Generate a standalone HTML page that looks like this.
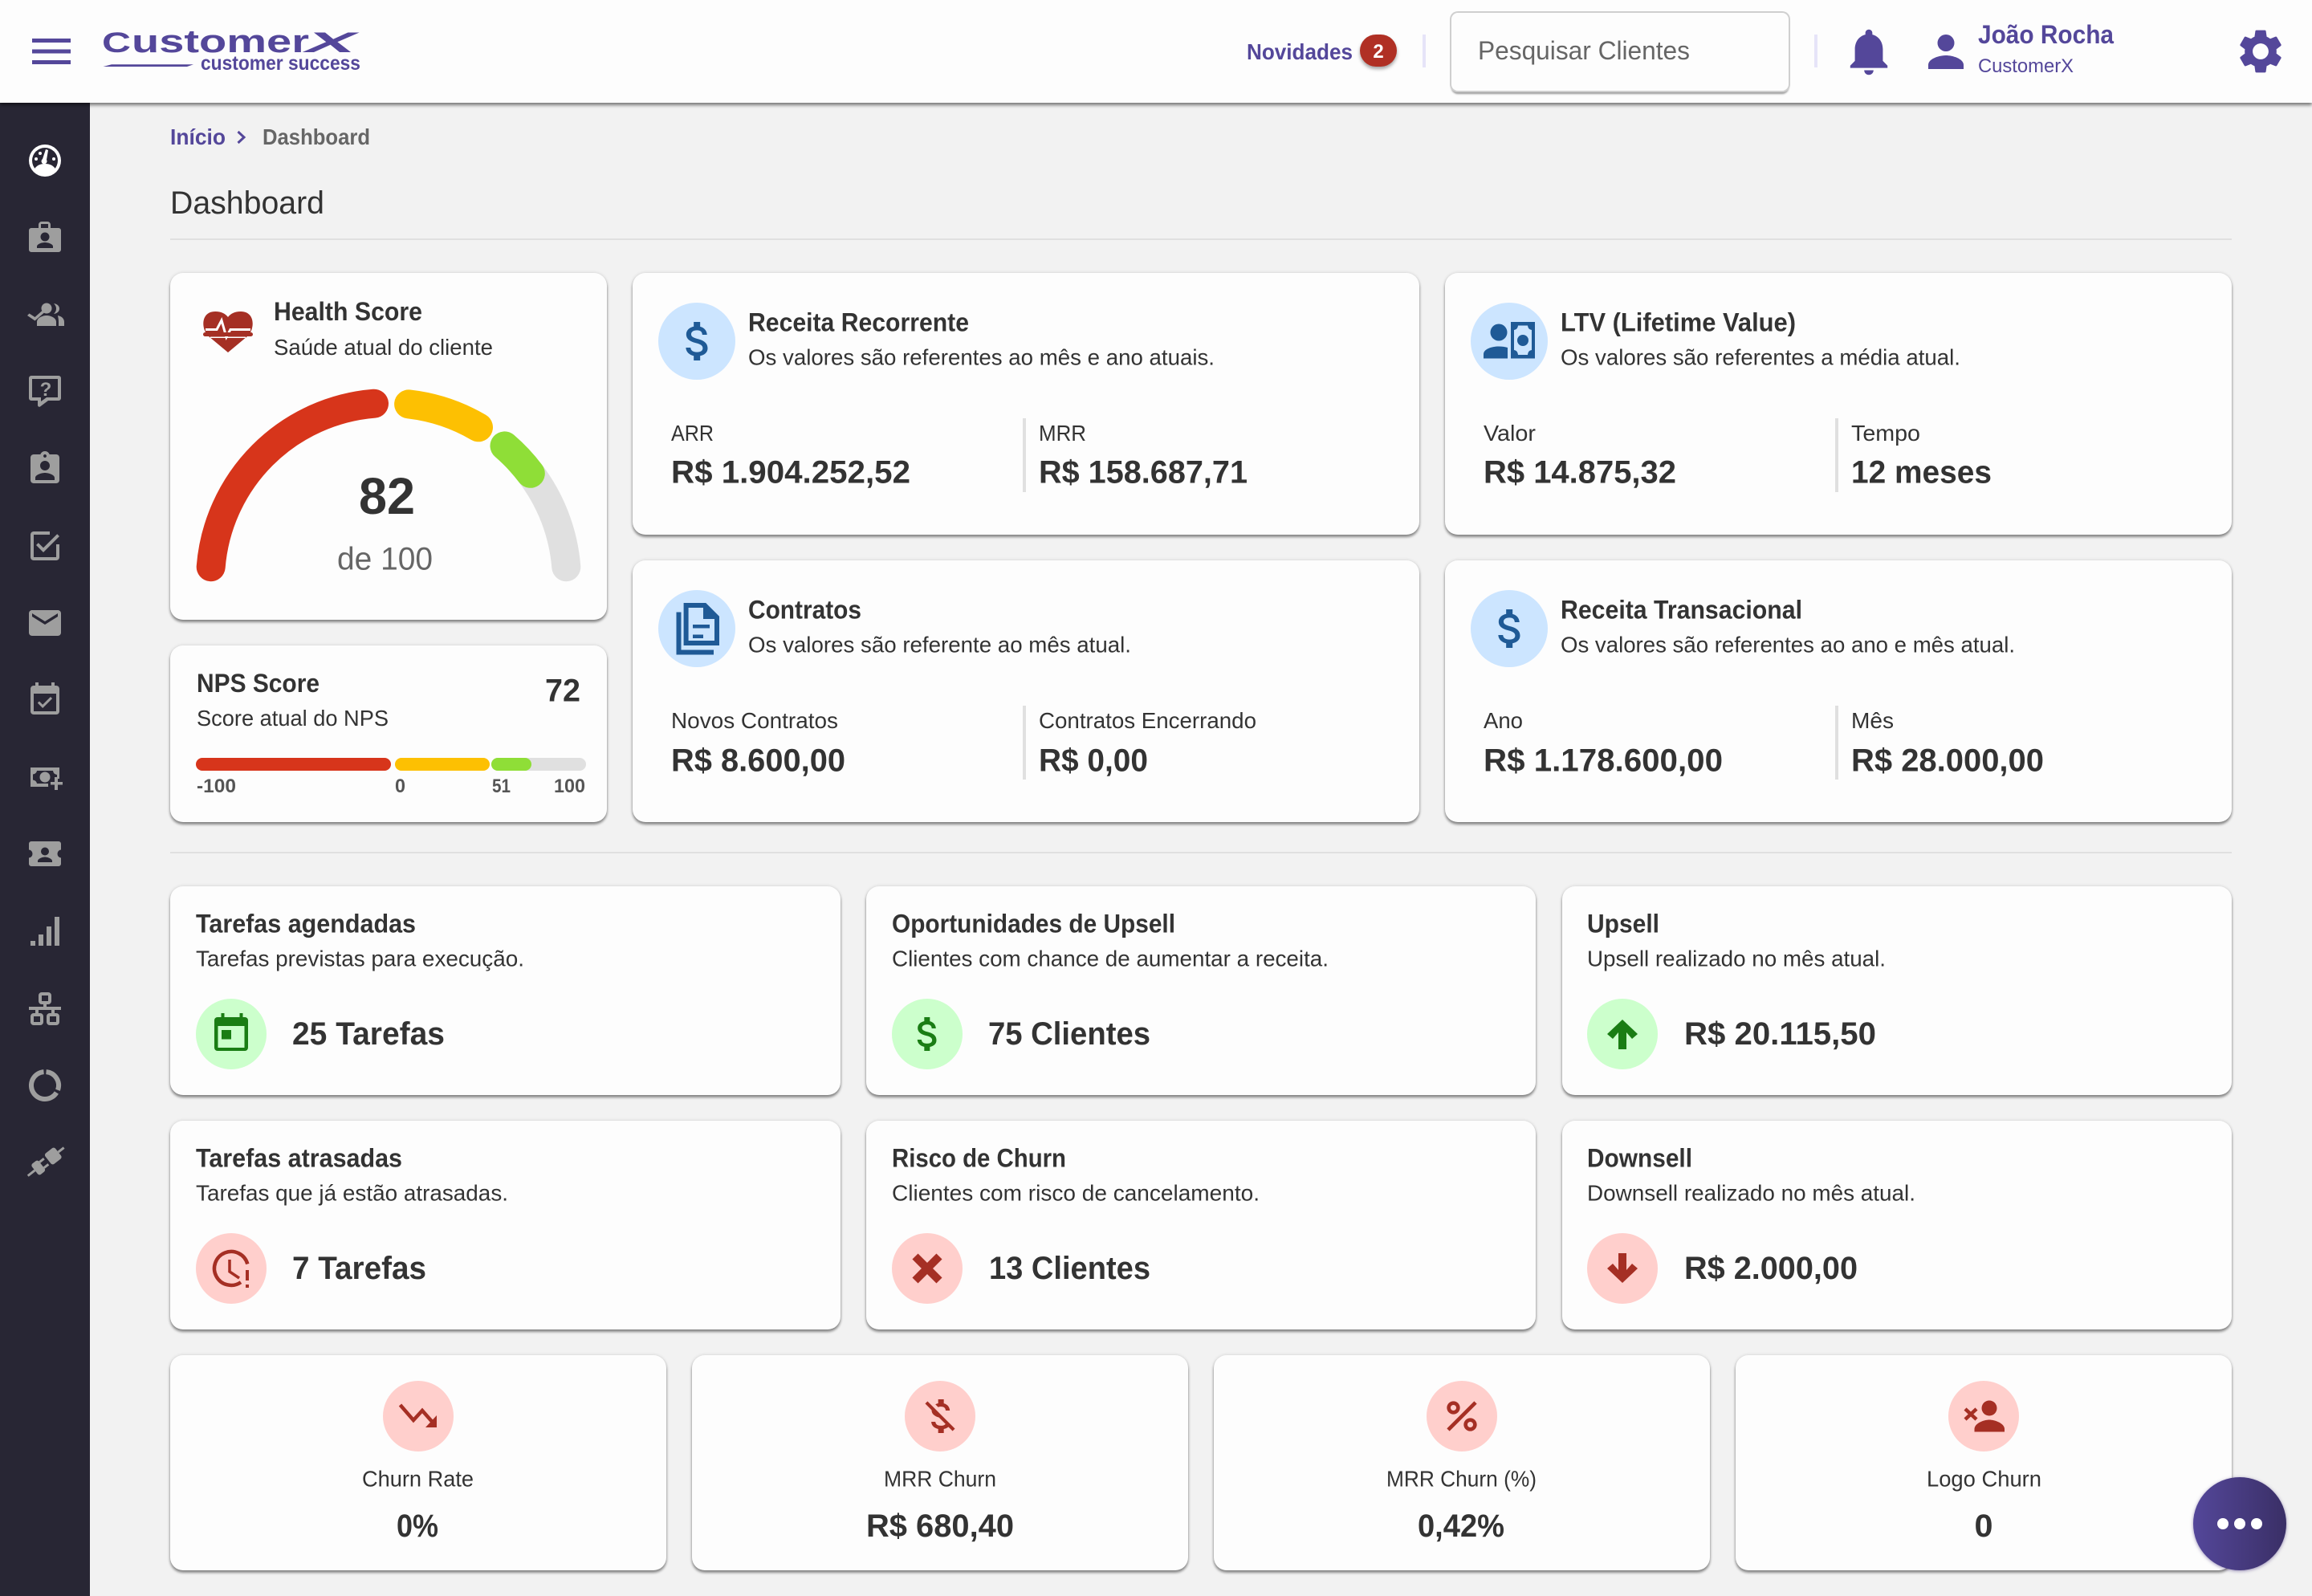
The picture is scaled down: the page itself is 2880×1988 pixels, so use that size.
<!DOCTYPE html>
<html lang="pt-BR"><head><meta charset="utf-8"><title>Dashboard</title>
<style>
html,body{margin:0;padding:0;width:2880px;height:1988px;overflow:hidden;background:#f2f2f2;font-family:"Liberation Sans",sans-serif}
.a{position:absolute}
#head{left:0;top:0;width:2880px;height:128px;background:#fdfdfd;box-shadow:0 3px 4px rgba(0,0,0,.5);z-index:3}
#side{left:0;top:128px;width:112px;height:1860px;background:#282634;z-index:2}
.c{position:absolute;background:#fdfdfd;border-radius:16px;box-shadow:0 3px 3px rgba(0,0,0,.42),0 0 4px rgba(0,0,0,.14)}
#search{left:1808px;top:16px;width:420px;height:97px;background:#fdfdfd;border-radius:8px;box-shadow:0 0 0 2px #cfcfcf,0 4px 2px rgba(0,0,0,.4);z-index:4}
.hr{position:absolute;left:212px;width:2568px;height:2px;background:#e0e0e0}
svg{position:absolute;left:0;top:0;z-index:5}
text{font-family:"Liberation Sans",sans-serif;fill:#333}
.t{font-size:32px;font-weight:700}
.s{font-size:28px}
.v{font-size:40px;font-weight:700}
.l{font-size:28px}
.n{font-size:24px;font-weight:700;fill:#555}
.p{fill:#54479a}
.g{fill:#9e9e9e}
.d{fill:#282634}
.bl{fill:#1f5a96}
.gr{fill:#1a7d14}
.re{fill:#a52f24}
</style></head><body>
<div class="a" id="head"></div><div class="a" id="side"></div><div class="a" id="search"></div>
<div class="hr" style="top:297px"></div><div class="hr" style="top:1061px"></div>
<div class="c" style="left:212px;top:340px;width:544px;height:432px"></div>
<div class="c" style="left:212px;top:804px;width:544px;height:220px"></div>
<div class="c" style="left:788px;top:340px;width:980px;height:326px"></div>
<div class="c" style="left:788px;top:698px;width:980px;height:326px"></div>
<div class="c" style="left:1800px;top:340px;width:980px;height:326px"></div>
<div class="c" style="left:1800px;top:698px;width:980px;height:326px"></div>
<div class="c" style="left:212px;top:1104px;width:835px;height:260px"></div>
<div class="c" style="left:1079px;top:1104px;width:834px;height:260px"></div>
<div class="c" style="left:1946px;top:1104px;width:834px;height:260px"></div>
<div class="c" style="left:212px;top:1396px;width:835px;height:260px"></div>
<div class="c" style="left:1079px;top:1396px;width:834px;height:260px"></div>
<div class="c" style="left:1946px;top:1396px;width:834px;height:260px"></div>
<div class="c" style="left:212px;top:1688px;width:618px;height:268px"></div>
<div class="c" style="left:862px;top:1688px;width:618px;height:268px"></div>
<div class="c" style="left:1512px;top:1688px;width:618px;height:268px"></div>
<div class="c" style="left:2162px;top:1688px;width:618px;height:268px"></div>

<svg width="2880" height="1988" viewBox="0 0 2880 1988" xmlns="http://www.w3.org/2000/svg">
<defs>
<linearGradient id="fab" x1="0" x2="1" y1="0" y2="0"><stop offset="0" stop-color="#54479a"/><stop offset="1" stop-color="#3a2f66"/></linearGradient>
<path id="dollar" d="M11.8 10.9c-2.27-.59-3-1.2-3-2.15 0-1.09 1.01-1.85 2.7-1.85 1.78 0 2.44.85 2.5 2.1h2.21c-.07-1.72-1.12-3.3-3.21-3.81V3h-3v2.16c-1.94.42-3.5 1.68-3.5 3.61 0 2.31 1.91 3.46 4.7 4.13 2.5.6 3 1.48 3 2.41 0 .69-.49 1.79-2.7 1.79-2.06 0-2.87-.92-2.98-2.1h-2.2c.12 2.19 1.76 3.42 3.68 3.83V21h3v-2.15c1.95-.37 3.5-1.5 3.5-3.55 0-2.84-2.43-3.81-4.7-4.4z"/>
<path id="arrow" d="M0-18.5L19-.5 12 5.5 5-2.500V18.500H-5V-2.500L-12 5.500-19-.5z"/>
</defs>

<!-- header -->
<g class="p"><rect x="40" y="48" width="48" height="5"/><rect x="40" y="61.500" width="48" height="5"/><rect x="40" y="75" width="48" height="5"/></g>
<text x="127" y="65" font-size="35" font-weight="700" style="fill:#54479a" textLength="36" lengthAdjust="spacingAndGlyphs">C</text>
<text x="164" y="65" font-size="40" font-weight="700" style="fill:#54479a" textLength="221" lengthAdjust="spacingAndGlyphs">ustomer</text>
<text x="381" y="65" font-size="35" font-weight="700" font-style="italic" style="fill:#54479a" textLength="62" lengthAdjust="spacingAndGlyphs">X</text>
<text x="250" y="87" font-size="25" font-weight="700" style="fill:#54479a" textLength="199" lengthAdjust="spacingAndGlyphs">customer success</text>
<path class="p" d="M128.500 83L139 80.300H241L233 83z"/>

<text x="1553" y="74" class="t" font-size="28" style="fill:#54479a;font-size:28px" textLength="132" lengthAdjust="spacingAndGlyphs">Novidades</text>
<rect x="1694" y="43" width="46" height="40" rx="20" fill="#b03024" style="filter:drop-shadow(0 3px 2px rgba(0,0,0,.35))"/>
<text x="1717" y="72" text-anchor="middle" font-size="24" font-weight="700" style="fill:#fff">2</text>
<rect x="1772" y="43" width="4" height="41" fill="#e6e4f8"/>
<text x="1841" y="74" font-size="32" style="fill:#666" textLength="264" lengthAdjust="spacingAndGlyphs">Pesquisar Clientes</text>
<rect x="2260" y="43" width="4" height="41" fill="#e6e4f8"/>
<path class="p" transform="translate(2293.200 29.500) scale(2.900)" d="M12 22c1.100 0 2-.9 2-2h-4c0 1.100.89 2 2 2zm6-6v-5c0-3.070-1.640-5.640-4.500-6.320V4c0-.83-.67-1.500-1.500-1.500s-1.500.67-1.500 1.500v.68C7.630 5.360 6 7.920 6 11v5l-2 2v1h16v-1l-2-2z"/>
<circle class="p" cx="2424" cy="53.500" r="10.500"/>
<path class="p" d="M2402 86v-5c0-8 14-12 22-12s22 4 22 12v5z"/>
<text x="2464" y="54" font-size="32" font-weight="700" style="fill:#54479a" textLength="169" lengthAdjust="spacingAndGlyphs">João Rocha</text>
<text x="2464" y="90" font-size="24" style="fill:#54479a" textLength="119" lengthAdjust="spacingAndGlyphs">CustomerX</text>
<path class="p" transform="translate(2783 31) scale(2.750)" d="M19.140 12.940c.04-.3.06-.61.06-.94 0-.32-.02-.64-.07-.94l2.030-1.580c.18-.14.23-.41.12-.61l-1.920-3.320c-.12-.22-.37-.29-.59-.22l-2.390.96c-.5-.38-1.030-.7-1.620-.94l-.36-2.540c-.04-.24-.24-.41-.48-.41h-3.840c-.24 0-.43.17-.47.41l-.36 2.540c-.59.24-1.130.57-1.620.94l-2.390-.96c-.22-.08-.47 0-.59.22L2.740 8.870c-.12.21-.08.47.12.61l2.030 1.580c-.05.3-.09.63-.09.94s.02.64.07.94l-2.030 1.580c-.18.14-.23.41-.12.61l1.920 3.320c.12.22.37.29.59.22l2.390-.96c.5.38 1.030.7 1.620.94l.36 2.540c.05.24.24.41.48.41h3.840c.24 0 .44-.17.47-.41l.36-2.540c.59-.24 1.130-.56 1.620-.94l2.390.96c.22.08.47 0 .59-.22l1.920-3.320c.12-.22.07-.47-.12-.61l-2.010-1.580zM12 15.600c-1.980 0-3.600-1.620-3.600-3.600s1.620-3.600 3.600-3.600 3.600 1.620 3.600 3.600-1.620 3.600-3.600 3.600z"/>

<!-- sidebar -->
<circle cx="56" cy="200" r="20" fill="#fff"/><circle class="d" cx="56" cy="200" r="16"/>
<path fill="#fff" d="M42 212c3-6 8-8 14-8s11 2 14 8c-4 4-9 6-14 6s-10-2-14-6z"/>
<circle cx="45" cy="198" r="2" fill="#fff"/><circle cx="50" cy="191" r="2" fill="#fff"/><circle cx="67" cy="198" r="2" fill="#fff"/>
<path fill="#fff" d="M57 186l3 1-2 12a3.500 3.500 0 1 1-5-1z"/>

<g class="g">
<path fill-rule="evenodd" d="M39 284h9v-4a4 4 0 0 1 4-4h7a4 4 0 0 1 4 4v4h10a3 3 0 0 1 3 3v24a3 3 0 0 1-3 3H39a3 3 0 0 1-3-3v-24a3 3 0 0 1 3-3zm12 0h9v-5h-9z"/>
<circle class="d" cx="56" cy="295" r="5.500"/><path class="d" d="M46 309v-2c0-3 6-5 10-5s10 2 10 5v2z"/>

<path d="M34 393l2.500-2.500 7 4.500 9-8 2.500 2.500-11.500 10z"/>
<circle cx="58" cy="384" r="6.500"/><path d="M46 406v-5c0-5 7-8 12-8s12 3 12 8v5z"/>
<path d="M67 378c4 .5 7 3 7 6.500s-3 6-7 6.500c2-2 3-4 3-6.500s-1-4.500-3-6.500zM72 393c5 1 8 4 8 8v5h-7v-5c0-3-.5-5.500-1-8z"/>

<path fill-rule="evenodd" d="M39 468h34a3 3 0 0 1 3 3v25a3 3 0 0 1-3 3H60l-10 7.500a2 2 0 0 1-3-1.500V499h-8a3 3 0 0 1-3-3v-25a3 3 0 0 1 3-3zm1 4v23h11v5l7-5h14v-23z"/>
<text x="57" y="493" text-anchor="middle" font-size="24" font-weight="700" style="fill:#9e9e9e">?</text>

<path transform="translate(32 560) scale(2)" d="M19 3h-4.180C14.400 1.840 13.300 1 12 1c-1.300 0-2.400.84-2.820 2H5c-1.100 0-2 .9-2 2v14c0 1.100.9 2 2 2h14c1.100 0 2-.9 2-2V5c0-1.100-.9-2-2-2zm-7 0c.55 0 1 .45 1 1s-.45 1-1 1-1-.45-1-1 .45-1 1-1zm0 4c1.660 0 3 1.340 3 3s-1.340 3-3 3-3-1.340-3-3 1.340-3 3-3zm6 12H6v-1.400c0-2 4-3.100 6-3.100s6 1.100 6 3.100V19z"/>
<path transform="translate(32 656) scale(2)" d="M19 19H5V5h10V3H5c-1.100 0-2 .9-2 2v14c0 1.100.9 2 2 2h14c1.100 0 2-.9 2-2v-8h-2v8zM7.900 10.100L6.500 11.500 11 16l10-10-1.400-1.400-8.600 8.600-3.100-3.100z"/>
<path transform="translate(32 752) scale(2)" d="M20 4H4c-1.100 0-1.990.9-1.990 2L2 18c0 1.100.9 2 2 2h16c1.100 0 2-.9 2-2V6c0-1.100-.9-2-2-2zm0 4l-8 5-8-5V6l8 5 8-5v2z"/>
<path transform="translate(32 848) scale(2)" d="M16.530 11.060L15.470 10l-4.880 4.880-2.120-2.120-1.060 1.060L10.590 17l5.940-5.940zM19 3h-1V1h-2v2H8V1H6v2H5c-1.110 0-1.990.9-1.990 2L3 19c0 1.100.89 2 2 2h14c1.100 0 2-.9 2-2V5c0-1.100-.9-2-2-2zm0 16H5V8h14v11z"/>

<rect x="38" y="956" width="36" height="24"/>
<path class="d" d="M46 960h20c.5 3 2 4.500 5 5v10h-1v1H46c-.5-2.500-2-4-5-4.500v-7c3-.5 4.500-2 5-4.500z"/>
<circle cx="56" cy="968" r="6.500"/>
<rect class="d" x="60" y="970" width="18" height="14" rx="5"/>
<rect x="63" y="974" width="15" height="3.500"/><rect x="68" y="968" width="4" height="16"/>

<path d="M39 1048h34a3 3 0 0 1 3 3v7.500a4.500 5 0 0 0 0 10v7.500a3 3 0 0 1-3 3H39a3 3 0 0 1-3-3v-7.500a4.500 5 0 0 0 0-10V1051a3 3 0 0 1 3-3z"/>
<circle class="d" cx="56" cy="1060.500" r="5"/><path class="d" d="M47 1074v-1.500c0-3 6-5 9-5s9 2 9 5v1.500z"/>

<rect x="38" y="1172" width="6" height="6"/><rect x="48" y="1164" width="6" height="14"/><rect x="58" y="1154" width="6" height="24"/><rect x="68" y="1142" width="6" height="36"/>

<rect x="50" y="1238" width="12" height="11" rx="2" fill="none" stroke="#9e9e9e" stroke-width="4"/>
<rect x="54" y="1250" width="4" height="5"/><rect x="36" y="1254" width="40" height="4"/>
<rect x="44" y="1258" width="4" height="5"/><rect x="64" y="1258" width="4" height="5"/>
<rect x="40" y="1264" width="12" height="11" rx="2" fill="none" stroke="#9e9e9e" stroke-width="4"/>
<rect x="60" y="1264" width="12" height="11" rx="2" fill="none" stroke="#9e9e9e" stroke-width="4"/>

<path d="M57.500 1335.100A17 17 0 0 1 72 1357.800M70.400 1361A17 17 0 1 1 54.500 1335.100" fill="none" stroke="#9e9e9e" stroke-width="6"/>

<g transform="translate(56 1448) rotate(-38)">
<rect x="5" y="-8.500" width="16" height="17" rx="3"/><rect x="21" y="-1.500" width="9" height="3"/>
<rect x="-16" y="-8.500" width="11" height="17" rx="3"/><rect x="-5" y="-6" width="7" height="3"/><rect x="-5" y="3" width="7" height="3"/><rect x="-27" y="-1.500" width="11" height="3"/>
</g>
</g>

<!-- breadcrumb -->
<text x="212" y="180" font-size="28" font-weight="700" style="fill:#54479a" textLength="69" lengthAdjust="spacingAndGlyphs">Início</text>
<path d="M296.500 164l7.500 7-7.500 7" fill="none" stroke="#54479a" stroke-width="3"/>
<text x="327" y="180" font-size="28" font-weight="700" style="fill:#666" textLength="134" lengthAdjust="spacingAndGlyphs">Dashboard</text>
<text x="212" y="266" font-size="40" style="fill:#333" textLength="192" lengthAdjust="spacingAndGlyphs">Dashboard</text>

<!-- health card -->
<path class="re" d="M284 439L260 419C250 410 250 388 268 388C276 388 281 391 284 395C287 391 292 388 300 388C318 388 318 410 308 419Z"/>
<path d="M256 410.500H270L276 399 282 420 287 410.500H312" fill="none" stroke="#fff" stroke-width="3"/>
<rect class="re" x="253" y="414" width="62" height="5" rx="2.500"/>
<rect x="262" y="419.500" width="44" height="1.500" fill="#fff"/>
<text x="341" y="399" class="t" textLength="185" lengthAdjust="spacingAndGlyphs">Health Score</text>
<text x="341" y="442" class="s" textLength="273" lengthAdjust="spacingAndGlyphs">Saúde atual do cliente</text>
<g fill="none" stroke-width="36" stroke-linecap="round">
<path stroke="#e0e0e0" d="M660.800 589.800A222 222 0 0 1 705.300 706.200"/>
<path stroke="#d7351b" d="M262.700 706.200A222 222 0 0 1 466 502.700"/>
<path stroke="#fdc002" d="M509.100 503.400A222 222 0 0 1 596 532.300"/>
<path stroke="#8fde37" d="M628.500 555.400A222 222 0 0 1 660.800 589.800"/>
</g>
<text x="447" y="640" font-size="64" font-weight="700" textLength="70" lengthAdjust="spacingAndGlyphs">82</text>
<text x="420" y="709.500" font-size="40" style="fill:#666" textLength="119" lengthAdjust="spacingAndGlyphs">de 100</text>

<!-- nps -->
<text x="245" y="862" class="t" textLength="153" lengthAdjust="spacingAndGlyphs">NPS Score</text>
<text x="245" y="904" class="s" textLength="239" lengthAdjust="spacingAndGlyphs">Score atual do NPS</text>
<text x="679" y="873.500" class="v" textLength="44" lengthAdjust="spacingAndGlyphs">72</text>
<rect x="612" y="944" width="118" height="16" rx="8" fill="#e0e0e0"/>
<rect x="244" y="944" width="243" height="16" rx="8" fill="#d7351b"/>
<rect x="492" y="944" width="118" height="16" rx="8" fill="#fdc002"/>
<rect x="612" y="944" width="50" height="16" rx="8" fill="#8fde37"/>
<text x="245" y="987" class="n" textLength="49" lengthAdjust="spacingAndGlyphs">-100</text>
<text x="492" y="987" class="n" textLength="13" lengthAdjust="spacingAndGlyphs">0</text>
<text x="613" y="987" class="n" textLength="23" lengthAdjust="spacingAndGlyphs">51</text>
<text x="690" y="987" class="n" textLength="39" lengthAdjust="spacingAndGlyphs">100</text>

<!-- circles blue -->
<g fill="#cce5ff"><circle cx="868" cy="425" r="48"/><circle cx="868" cy="783" r="48"/><circle cx="1880" cy="425" r="48"/><circle cx="1880" cy="783" r="48"/></g>
<use href="#dollar" class="bl" transform="translate(837.500 393) scale(2.667)"/>
<use href="#dollar" class="bl" transform="translate(1849.500 751) scale(2.667)"/>

<path d="M845.500 762.500V812.500H889" fill="none" stroke="#1f5a96" stroke-width="6"/>
<path d="M854.600 754H878L893 769V801H854.600Z" fill="none" stroke="#1f5a96" stroke-width="6"/>
<path class="bl" d="M876 751L896 771H876Z"/>
<rect class="bl" x="863" y="778" width="21" height="4.500"/><rect class="bl" x="863" y="790.500" width="13" height="4.500"/>

<circle class="bl" cx="1867" cy="414" r="10.500"/>
<path class="bl" d="M1848 446.500V441C1848 435 1858 431.500 1867 431.500C1871 431.500 1875 432 1878 433V446.500Z"/>
<rect class="bl" x="1882" y="401" width="30" height="45.500"/>
<path fill="#cce5ff" d="M1891 405.500H1903C1903.500 409 1905 410.500 1908 411V436C1905 436.500 1903.500 438 1903 442H1891C1890.500 438 1889 436.500 1886 436V411C1889 410.500 1890.500 409 1891 405.500Z"/>
<circle class="bl" cx="1897" cy="424" r="7"/>

<!-- revenue text -->
<text x="932" y="412.500" class="t" textLength="275" lengthAdjust="spacingAndGlyphs">Receita Recorrente</text>
<text x="932" y="454.500" class="s" textLength="581" lengthAdjust="spacingAndGlyphs">Os valores são referentes ao mês e ano atuais.</text>
<text x="836" y="549" class="l" textLength="53" lengthAdjust="spacingAndGlyphs">ARR</text>
<text x="836" y="601.500" class="v" textLength="298" lengthAdjust="spacingAndGlyphs">R$ 1.904.252,52</text>
<rect x="1274" y="521" width="4" height="92" fill="#e0e0e0"/>
<text x="1294" y="549" class="l" textLength="59" lengthAdjust="spacingAndGlyphs">MRR</text>
<text x="1294" y="601.500" class="v" textLength="260" lengthAdjust="spacingAndGlyphs">R$ 158.687,71</text>

<text x="932" y="770.500" class="t" textLength="141" lengthAdjust="spacingAndGlyphs">Contratos</text>
<text x="932" y="812.500" class="s" textLength="477" lengthAdjust="spacingAndGlyphs">Os valores são referente ao mês atual.</text>
<text x="836" y="907" class="l" textLength="208" lengthAdjust="spacingAndGlyphs">Novos Contratos</text>
<text x="836" y="960.500" class="v" textLength="217" lengthAdjust="spacingAndGlyphs">R$ 8.600,00</text>
<rect x="1274" y="879" width="4" height="92" fill="#e0e0e0"/>
<text x="1294" y="907" class="l" textLength="271" lengthAdjust="spacingAndGlyphs">Contratos Encerrando</text>
<text x="1294" y="960.500" class="v" textLength="136" lengthAdjust="spacingAndGlyphs">R$ 0,00</text>

<text x="1944" y="412.500" class="t" textLength="293" lengthAdjust="spacingAndGlyphs">LTV (Lifetime Value)</text>
<text x="1944" y="454.500" class="s" textLength="498" lengthAdjust="spacingAndGlyphs">Os valores são referentes a média atual.</text>
<text x="1848" y="549" class="l" textLength="65" lengthAdjust="spacingAndGlyphs">Valor</text>
<text x="1848" y="601.500" class="v" textLength="240" lengthAdjust="spacingAndGlyphs">R$ 14.875,32</text>
<rect x="2286" y="521" width="4" height="92" fill="#e0e0e0"/>
<text x="2306" y="549" class="l" textLength="86" lengthAdjust="spacingAndGlyphs">Tempo</text>
<text x="2306" y="601.500" class="v" textLength="175" lengthAdjust="spacingAndGlyphs">12 meses</text>

<text x="1944" y="770.500" class="t" textLength="301" lengthAdjust="spacingAndGlyphs">Receita Transacional</text>
<text x="1944" y="812.500" class="s" textLength="566" lengthAdjust="spacingAndGlyphs">Os valores são referentes ao ano e mês atual.</text>
<text x="1848" y="907" class="l" textLength="49" lengthAdjust="spacingAndGlyphs">Ano</text>
<text x="1848" y="960.500" class="v" textLength="298" lengthAdjust="spacingAndGlyphs">R$ 1.178.600,00</text>
<rect x="2286" y="879" width="4" height="92" fill="#e0e0e0"/>
<text x="2306" y="907" class="l" textLength="53" lengthAdjust="spacingAndGlyphs">Mês</text>
<text x="2306" y="960.500" class="v" textLength="240" lengthAdjust="spacingAndGlyphs">R$ 28.000,00</text>

<!-- task rows -->
<g fill="#ccffcc"><circle cx="288" cy="1288" r="44"/><circle cx="1155" cy="1288" r="44"/><circle cx="2021" cy="1288" r="44"/></g>
<g fill="#ffcfcc"><circle cx="288" cy="1580" r="44"/><circle cx="1155" cy="1580" r="44"/><circle cx="2021" cy="1580" r="44"/>
<circle cx="521" cy="1764" r="44"/><circle cx="1171" cy="1764" r="44"/><circle cx="1821" cy="1764" r="44"/><circle cx="2471" cy="1764" r="44"/></g>

<rect class="gr" x="267" y="1267" width="42" height="42" rx="4"/><rect x="271.500" y="1278" width="33" height="27" fill="#ccffcc"/>
<rect class="gr" x="276" y="1283" width="12" height="11.500"/><rect class="gr" x="275.500" y="1262" width="4" height="7"/><rect class="gr" x="298.500" y="1262" width="4" height="7"/>
<use href="#dollar" class="gr" transform="translate(1128 1260) scale(2.333)"/>
<use href="#arrow" class="gr" transform="translate(2021 1288.500)"/>

<path d="M308.300 1574.500A21 21 0 1 0 300 1597.200" fill="none" stroke="#a52f24" stroke-width="4.500"/>
<path d="M286 1569V1584L298 1592" fill="none" stroke="#a52f24" stroke-width="3.500"/>
<rect class="re" x="306" y="1582" width="4" height="13"/><rect class="re" x="306" y="1600" width="4" height="4"/>
<path d="M1140 1565L1170 1595M1170 1565L1140 1595" stroke="#a52f24" stroke-width="10" fill="none"/>
<use href="#arrow" class="re" transform="translate(2021 1579.500) scale(1 -1)"/>

<text x="244" y="1161.500" class="t" textLength="274" lengthAdjust="spacingAndGlyphs">Tarefas agendadas</text>
<text x="244" y="1203.500" class="s" textLength="409" lengthAdjust="spacingAndGlyphs">Tarefas previstas para execução.</text>
<text x="364" y="1301" class="v" textLength="190" lengthAdjust="spacingAndGlyphs">25 Tarefas</text>
<text x="1111" y="1161.500" class="t" textLength="353" lengthAdjust="spacingAndGlyphs">Oportunidades de Upsell</text>
<text x="1111" y="1203.500" class="s" textLength="544" lengthAdjust="spacingAndGlyphs">Clientes com chance de aumentar a receita.</text>
<text x="1231" y="1301" class="v" textLength="202" lengthAdjust="spacingAndGlyphs">75 Clientes</text>
<text x="1977" y="1161.500" class="t" textLength="90" lengthAdjust="spacingAndGlyphs">Upsell</text>
<text x="1977" y="1203.500" class="s" textLength="372" lengthAdjust="spacingAndGlyphs">Upsell realizado no mês atual.</text>
<text x="2098" y="1301" class="v" textLength="239" lengthAdjust="spacingAndGlyphs">R$ 20.115,50</text>

<text x="244" y="1453.500" class="t" textLength="257" lengthAdjust="spacingAndGlyphs">Tarefas atrasadas</text>
<text x="244" y="1495.500" class="s" textLength="389" lengthAdjust="spacingAndGlyphs">Tarefas que já estão atrasadas.</text>
<text x="364" y="1593" class="v" textLength="167" lengthAdjust="spacingAndGlyphs">7 Tarefas</text>
<text x="1111" y="1453.500" class="t" textLength="217" lengthAdjust="spacingAndGlyphs">Risco de Churn</text>
<text x="1111" y="1495.500" class="s" textLength="458" lengthAdjust="spacingAndGlyphs">Clientes com risco de cancelamento.</text>
<text x="1232" y="1593" class="v" textLength="201" lengthAdjust="spacingAndGlyphs">13 Clientes</text>
<text x="1977" y="1453.500" class="t" textLength="131" lengthAdjust="spacingAndGlyphs">Downsell</text>
<text x="1977" y="1495.500" class="s" textLength="409" lengthAdjust="spacingAndGlyphs">Downsell realizado no mês atual.</text>
<text x="2098" y="1593" class="v" textLength="216" lengthAdjust="spacingAndGlyphs">R$ 2.000,00</text>

<!-- churn -->
<path d="M498.500 1750L515 1769 526 1757 541 1774" fill="none" stroke="#a52f24" stroke-width="4.500"/>
<path class="re" d="M544 1763V1778H530Z"/>
<path class="re" transform="translate(1143 1736) scale(2.333)" d="M12.500 6.900c1.780 0 2.440.85 2.500 2.100h2.210c-.07-1.720-1.120-3.300-3.210-3.810V3h-3v2.160c-.53.12-1.030.3-1.480.54l1.470 1.470c.41-.17.91-.27 1.510-.27zM5.330 4.060L4.060 5.330 7.500 8.770c0 2.080 1.560 3.210 3.910 3.910l3.510 3.510c-.34.48-1.050.91-2.420.91-2.060 0-2.870-.92-2.980-2.100h-2.200c.12 2.190 1.760 3.420 3.680 3.830V21h3v-2.150c.96-.18 1.830-.55 2.460-1.120l2.220 2.220 1.270-1.270L5.330 4.060z"/>
<path class="re" transform="translate(1793 1736) scale(2.333)" d="M7.500 11C9.430 11 11 9.430 11 7.500S9.430 4 7.500 4 4 5.570 4 7.500 5.570 11 7.500 11zm0-5C8.330 6 9 6.670 9 7.500S8.330 9 7.500 9 6 8.330 6 7.500 6.670 6 7.500 6zM4.003 18.583 18.590 3.996 20.004 5.410 5.417 19.997zM16.500 13c-1.930 0-3.500 1.570-3.500 3.500s1.570 3.500 3.500 3.500 3.500-1.570 3.500-3.500-1.570-3.500-3.500-3.500zm0 5c-.83 0-1.500-.67-1.500-1.500s.67-1.500 1.500-1.500 1.500.67 1.500 1.500-.67 1.500-1.500 1.500z"/>
<circle class="re" cx="2478" cy="1754" r="9.500"/>
<path class="re" d="M2459.500 1783.500V1780C2459.500 1773 2471 1768.500 2478 1768.500S2497 1773 2497 1780V1783.500Z"/>
<path d="M2448 1755L2462 1768M2462 1755L2448 1768" stroke="#a52f24" stroke-width="4.500" fill="none"/>

<text x="451" y="1851.500" class="l" textLength="139" lengthAdjust="spacingAndGlyphs">Churn Rate</text>
<text x="494" y="1914" class="v" textLength="52" lengthAdjust="spacingAndGlyphs">0%</text>
<text x="1101" y="1851.500" class="l" textLength="140" lengthAdjust="spacingAndGlyphs">MRR Churn</text>
<text x="1079" y="1914" class="v" textLength="184" lengthAdjust="spacingAndGlyphs">R$ 680,40</text>
<text x="1727" y="1851.500" class="l" textLength="187" lengthAdjust="spacingAndGlyphs">MRR Churn (%)</text>
<text x="1766" y="1914" class="v" textLength="108" lengthAdjust="spacingAndGlyphs">0,42%</text>
<text x="2400" y="1851.500" class="l" textLength="143" lengthAdjust="spacingAndGlyphs">Logo Churn</text>
<text x="2459.500" y="1914" class="v" textLength="23" lengthAdjust="spacingAndGlyphs">0</text>

<!-- fab -->
<circle cx="2790" cy="1898" r="58" fill="url(#fab)" style="filter:drop-shadow(0 1px 2px rgba(60,40,120,.5))"/>
<circle cx="2769" cy="1898" r="7" fill="#fff"/><circle cx="2790" cy="1898" r="7" fill="#fff"/><circle cx="2811" cy="1898" r="7" fill="#fff"/>
</svg>
</body></html>
